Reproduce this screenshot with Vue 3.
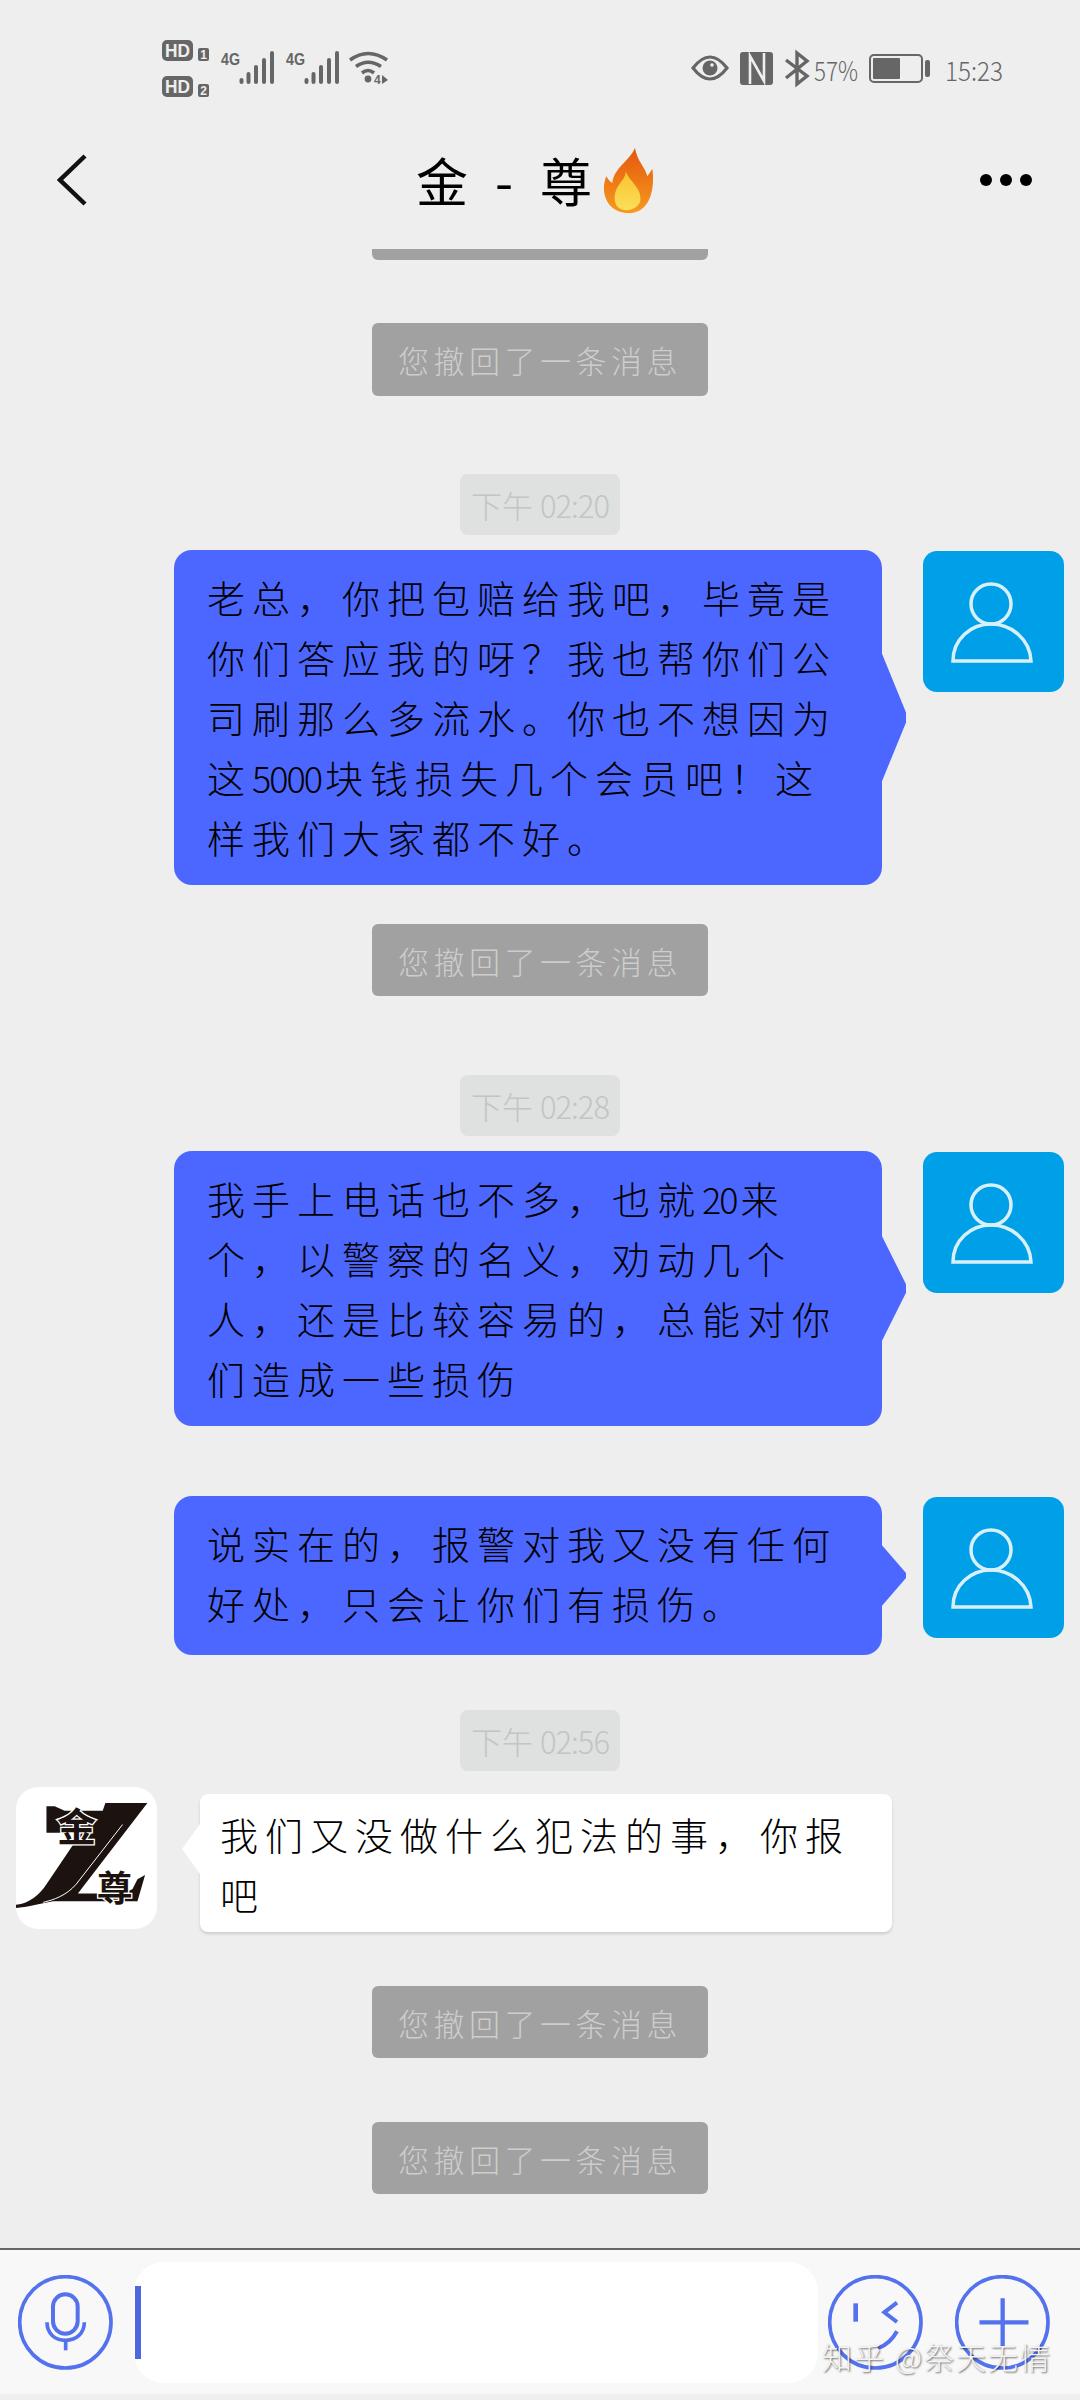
<script setup>
const rows = [
  { id: 1, cls: 'b1', lines: [['老总，你把包赔给我吧，毕竟是'], ['你们答应我的呀？我也帮你们公'], ['司刷那么多流水。你也不想因为'], ['这', '5000', '块钱损失几个会员吧！这'], ['样我们大家都不好。']] },
  { id: 2, cls: 'b2', lines: [['我手上电话也不多，也就', '20', '来'], ['个，以警察的名义，劝动几个'], ['人，还是比较容易的，总能对你'], ['们造成一些损伤']] },
  { id: 3, cls: 'b3', lines: [['说实在的，报警对我又没有任何'], ['好处，只会让你们有损伤。']] }
]
</script>

<template>
  <div class="page">
    <div class="status">
      <svg class="st-left" viewBox="162 38 230 62" width="230" height="62">
        <rect x="162" y="40" width="31" height="21" rx="5" fill="#666" />
        <text x="177.5" y="57" class="hd" text-anchor="middle" textLength="25" lengthAdjust="spacingAndGlyphs">HD</text>
        <rect x="198" y="48" width="11" height="13" rx="2" fill="#666" />
        <text x="203.5" y="59" class="hdn" text-anchor="middle">1</text>
        <rect x="162" y="76" width="31" height="21" rx="5" fill="#666" />
        <text x="177.5" y="93" class="hd" text-anchor="middle" textLength="25" lengthAdjust="spacingAndGlyphs">HD</text>
        <rect x="198" y="84" width="11" height="13" rx="2" fill="#666" />
        <text x="203.5" y="95" class="hdn" text-anchor="middle">2</text>
        <g fill="#666">
          <text x="221" y="65" class="fg" textLength="19" lengthAdjust="spacingAndGlyphs">4G</text>
          <rect x="239.5" y="78" width="4" height="6" rx="2" />
          <rect x="246.5" y="72" width="4" height="12" rx="2" />
          <rect x="254" y="65" width="4" height="19" rx="2" />
          <rect x="262" y="58" width="4" height="26" rx="2" />
          <rect x="270" y="51" width="4" height="33" rx="2" />
          <text x="286" y="65" class="fg" textLength="19" lengthAdjust="spacingAndGlyphs">4G</text>
          <rect x="304.5" y="78" width="4" height="6" rx="2" />
          <rect x="311.5" y="72" width="4" height="12" rx="2" />
          <rect x="319" y="65" width="4" height="19" rx="2" />
          <rect x="327" y="58" width="4" height="26" rx="2" />
          <rect x="335" y="51" width="4" height="33" rx="2" />
          <circle cx="368" cy="79" r="3.4" />
          <text x="374" y="84" class="wf">4</text>
          <polygon points="382,75 388,80 382,84" />
        </g>
        <g fill="none" stroke="#666" stroke-width="3.6">
          <path d="M350 60 Q368 47 387 60" />
          <path d="M356 66.500 Q368 58 381 66.500" />
          <path d="M362 73 Q368 68 374 73" />
        </g>
      </svg>
      <svg class="st-right" viewBox="690 38 350 62" width="350" height="62">
        <path d="M693 68 Q710 46 727 68 Q710 90 693 68Z" fill="none" stroke="#666" stroke-width="3.200" />
        <circle cx="710" cy="68" r="7.500" fill="#666" />
        <circle cx="712" cy="65" r="1.800" fill="#eee" />
        <rect x="740" y="52" width="33" height="33" rx="3" fill="#666" />
        <path d="M750 84V56L764 81V53" fill="none" stroke="#eee" stroke-width="2.600" />
        <path d="M786 60L807 76L797 84V53L807 61L786 78" fill="none" stroke="#666" stroke-width="3.400" />
        <text x="814" y="81" class="thin" textLength="44" lengthAdjust="spacingAndGlyphs">57%</text>
        <rect x="870" y="55" width="52" height="27" rx="4" fill="none" stroke="#666" stroke-width="2" />
        <rect x="873" y="58" width="27" height="21" rx="1" fill="#666" />
        <rect x="925" y="60" width="5" height="17" rx="2" fill="#666" />
        <text x="945" y="81" class="thin" textLength="58" lengthAdjust="spacingAndGlyphs">15:23</text>
      </svg>
    </div>

    <header class="nav">
      <svg class="back" viewBox="0 0 32 54" width="32" height="54">
        <path d="M28 3L3 27L28 51" fill="none" stroke="#111" stroke-width="4.500" />
      </svg>
      <div class="title">
        <span>金</span>
        <span class="dash">-</span>
        <span>尊</span>
        <svg class="flame" viewBox="615 30 147 195" width="49" height="65">
          <defs>
            <linearGradient id="fo" x1="0" y1="0" x2="0" y2="1">
              <stop offset="0" stop-color="#e4570f" />
              <stop offset="1" stop-color="#f79a1c" />
            </linearGradient>
            <linearGradient id="fy" x1="0" y1="0" x2="0" y2="1">
              <stop offset="0" stop-color="#f9c22e" />
              <stop offset="1" stop-color="#fbdf5b" />
            </linearGradient>
          </defs>
          <path d="M708 30C715 70 740 90 745 115C750 108 755 100 760 92C768 150 755 225 688 225C630 225 600 170 622 115C630 128 632 130 640 135C645 90 690 70 708 30Z" fill="url(#fo)" />
          <path d="M680 100C690 130 730 150 724 190C716 215 680 224 660 210C640 195 645 160 660 140C672 125 680 115 680 100Z" fill="url(#fy)" />
        </svg>
      </div>
      <div class="dots"><i></i><i></i><i></i></div>
    </header>

    <main class="chat">
      <div class="recall clipped"></div>
      <div class="recall r1">您撤回了一条消息</div>

      <div class="time t1">下午 <span class="num">02:20</span></div>
      <div class="row mine first-row">
        <div class="bubble blue b1">
          <div v-for="(l, i) in rows[0].lines" :key="i" class="line">
            <template v-for="(p, j) in l" :key="j"><span v-if="/^\d+$/.test(p)" class="digits">{{ p }}</span><template v-else>{{ p }}</template></template>
          </div>
        </div>
        <div class="avatar-me">
          <svg viewBox="0 0 141 141" width="141" height="141">
            <circle cx="68" cy="53" r="20" fill="none" stroke="#d8f0fb" stroke-width="3.500" />
            <path d="M30 110C30 88 48 73 68 73C88 73 107 88 108 110Z" fill="none" stroke="#d8f0fb" stroke-width="3.500" />
          </svg>
        </div>
      </div>

      <div class="recall r2">您撤回了一条消息</div>

      <div class="time t2">下午 <span class="num">02:28</span></div>
      <div class="row mine first-row">
        <div class="bubble blue b2">
          <div v-for="(l, i) in rows[1].lines" :key="i" class="line">
            <template v-for="(p, j) in l" :key="j"><span v-if="/^\d+$/.test(p)" class="digits">{{ p }}</span><template v-else>{{ p }}</template></template>
          </div>
        </div>
        <div class="avatar-me">
          <svg viewBox="0 0 141 141" width="141" height="141">
            <circle cx="68" cy="53" r="20" fill="none" stroke="#d8f0fb" stroke-width="3.500" />
            <path d="M30 110C30 88 48 73 68 73C88 73 107 88 108 110Z" fill="none" stroke="#d8f0fb" stroke-width="3.500" />
          </svg>
        </div>
      </div>

      <div class="row mine third-row">
        <div class="bubble blue b3">
          <div v-for="(l, i) in rows[2].lines" :key="i" class="line">{{ l[0] }}</div>
        </div>
        <div class="avatar-me">
          <svg viewBox="0 0 141 141" width="141" height="141">
            <circle cx="68" cy="53" r="20" fill="none" stroke="#d8f0fb" stroke-width="3.500" />
            <path d="M30 110C30 88 48 73 68 73C88 73 107 88 108 110Z" fill="none" stroke="#d8f0fb" stroke-width="3.500" />
          </svg>
        </div>
      </div>

      <div class="time t3">下午 <span class="num">02:56</span></div>
      <div class="row theirs">
        <div class="avatar-them">
          <svg viewBox="18 18 426 426" width="141" height="142">
            <path d="M110 75H135L165 88H280L288 65H415L205 338H345L370 325L385 295L408 282L385 362H130C90 370 50 380 18 382V372C60 368 90 340 110 310L215 155H110Z" fill="#1c1310" />
            <path d="M340 130L200 310C170 345 130 358 100 365" fill="none" stroke="#fff" stroke-width="3" />
            <text x="142" y="180" class="logo-t">金</text>
            <text x="262" y="362" class="logo-t small">尊</text>
          </svg>
        </div>
        <div class="bubble white-b">
          <div class="line">我们又没做什么犯法的事，你报</div>
          <div class="line">吧</div>
        </div>
      </div>

      <div class="recall r3">您撤回了一条消息</div>
      <div class="recall r4">您撤回了一条消息</div>
    </main>

    <footer class="composer">
      <svg viewBox="25 30 285 285" width="95" height="95">
        <g fill="none" stroke="#5471ee">
          <circle cx="167" cy="172" r="137" stroke-width="11" />
          <rect x="130" y="88" width="74" height="118" rx="37" stroke-width="12" />
          <path d="M112 172C112 205 135 226 168 226C200 226 224 205 224 172" stroke-width="11" />
          <path d="M168 226V256" stroke-width="11" />
        </g>
      </svg>
      <div class="input"><span class="cursor"></span></div>
      <svg class="emoji" viewBox="55 45 285 285" width="95" height="95">
        <g fill="none" stroke="#5471ee" stroke-width="11">
          <circle cx="197" cy="187" r="137" />
          <path d="M138 130V185" stroke-width="14" />
          <path d="M262 128L224 157L262 186" stroke-width="12" />
          <path d="M262 214C245 245 225 258 205 265" stroke-width="12" />
        </g>
      </svg>
      <svg class="plus" viewBox="433 45 287 287" width="95" height="95">
        <g fill="none" stroke="#5471ee" stroke-width="11">
          <circle cx="576" cy="188" r="138" />
          <path d="M577 115V262M507 188H655" stroke-width="13" />
        </g>
      </svg>
      <div class="mark">知乎 @祭天无情</div>
    </footer>
    <div class="foot-strip"></div>
  </div>
</template>

<style>
html, body { margin: 0; background: #eeeeef; }
</style>

<style scoped>
.page {
  position: relative;
  width: 1080px;
  height: 2400px;
  overflow: hidden;
  background: #eeeeef;
  font-family: "Noto Sans CJK SC", "Liberation Sans", sans-serif;
  font-weight: 300;
  display: flex;
  flex-direction: column;
}
.status {
  height: 130px;
  flex: none;
  display: flex;
  justify-content: space-between;
  align-items: flex-start;
  padding: 38px 40px 0 162px;
  box-sizing: border-box;
}
.hd { font: 700 19px "Liberation Sans", sans-serif; fill: #eee; }
.hdn { font: 700 12px "Liberation Sans", sans-serif; fill: #eee; }
.fg { font: 700 17px "Liberation Sans", sans-serif; }
.wf { font: 700 12px "Liberation Sans", sans-serif; }
.thin { font: 300 27px "Noto Sans CJK SC", sans-serif; fill: #666; }

.nav {
  height: 119px;
  flex: none;
  box-sizing: border-box;
  padding: 0 48px 19px 57px;
  display: grid;
  grid-template-columns: 1fr auto 1fr;
  align-items: center;
}
.title {
  display: flex;
  align-items: center;
  margin-right: 20px;
  font-size: 52px;
  font-weight: 400;
  line-height: 66px;
  color: #000;
}
.dash { width: 72px; text-align: center; }
.flame { margin-left: 12px; }
.dots {
  justify-self: end;
  display: flex;
  gap: 8px;
}
.dots i {
  width: 12px;
  height: 12px;
  border-radius: 50%;
  background: #000;
}

.chat {
  flex: 1;
  overflow: hidden;
  display: flex;
  flex-direction: column;
}
.recall {
  flex: none;
  align-self: center;
  width: 336px;
  height: 73px;
  box-sizing: border-box;
  border-radius: 6px;
  background: #a1a1a1;
  color: #cdcdcd;
  font-size: 31px;
  letter-spacing: 4.500px;
  line-height: 73px;
  text-align: center;
  white-space: nowrap;
}
.clipped { height: 11px; border-radius: 0 0 6px 6px; }
.r1 { margin-top: 63px; }
.r2 { margin-top: 39px; height: 72px; }
.r3 { margin-top: 54px; height: 72px; }
.r4 { margin-top: 64px; height: 72px; }

.time {
  flex: none;
  align-self: center;
  width: 160px;
  height: 61px;
  border-radius: 8px;
  background: #dfe0e0;
  color: #c3c4c4;
  font-size: 31px;
  line-height: 61px;
  text-align: center;
  white-space: nowrap;
}
.num { letter-spacing: -1px; font-size: 31px; }
.t1 { margin-top: 78px; }
.t2 { margin-top: 79px; }
.t3 { margin-top: 55px; }

.row { display: flex; flex: none; align-items: flex-start; }
.mine { padding-left: 174px; }
.first-row { margin-top: 15px; }
.third-row { margin-top: 70px; }
.theirs { margin-top: 16px; padding-left: 16px; }

.bubble {
  position: relative;
  box-sizing: border-box;
  font-size: 38px;
  letter-spacing: 7px;
  line-height: 60px;
  color: #000;
  white-space: nowrap;
}
.line { height: 60px; }
.digits { font-size: 36px; letter-spacing: -2px; margin-right: 4px; }
.blue {
  width: 708px;
  padding: 17px 0 18px 33px;
  margin-right: 41px;
  border-radius: 18px;
  background: #4c67ff;
}
.blue::after {
  content: "";
  position: absolute;
  left: 100%;
  top: 31%;
  width: 24px;
  height: 38%;
  background: #4c67ff;
  clip-path: polygon(0 0, 100% 46%, 100% 54%, 0 100%);
}
.b3 { padding-bottom: 22px; }
.avatar-me {
  flex: none;
  width: 141px;
  height: 141px;
  margin-top: 1px;
  border-radius: 14px;
  background: #00a0e9;
}
.avatar-me svg, .avatar-them svg { display: block; }
.avatar-them {
  flex: none;
  width: 141px;
  height: 142px;
  margin-right: 43px;
  border-radius: 22px;
  background: #fff;
  overflow: hidden;
}
.logo-t {
  font-family: "Noto Sans CJK SC", sans-serif;
  font-weight: 700;
  font-size: 118px;
  fill: #1c1310;
  stroke: #fff;
  stroke-width: 8px;
  paint-order: stroke;
}
.logo-t.small { font-size: 108px; }
.white-b {
  width: 692px;
  margin-top: 7px;
  padding: 10px 0 8px 20px;
  border-radius: 8px;
  background: #fff;
  box-shadow: 0 2px 3px rgba(0, 0, 0, 0.14);
}
.white-b::before {
  content: "";
  position: absolute;
  right: 100%;
  top: 30px;
  width: 18px;
  height: 50px;
  background: #fff;
  clip-path: polygon(100% 0, 0 50%, 100% 100%);
}

.composer {
  position: relative;
  flex: none;
  height: 146px;
  box-sizing: border-box;
  border-top: 2px solid #666;
  background: #f8f8f8;
  display: flex;
  align-items: center;
  padding-left: 18px;
}
.input {
  width: 684px;
  height: 121px;
  margin: 0 10px 0 21px;
  border-radius: 30px;
  background: #fff;
  display: flex;
  align-items: center;
}
.cursor {
  width: 6px;
  height: 73px;
  margin-left: 1px;
  background: #4f67dc;
}
.plus { margin-left: 32px; }
.mark {
  position: absolute;
  left: 822px;
  top: 88px;
  font-size: 30px;
  letter-spacing: 2px;
  line-height: 36px;
  color: #f4f4f4;
  white-space: nowrap;
  text-shadow: 1px 1px 2px rgba(0, 0, 0, 0.6);
}
.foot-strip { height: 6px; flex: none; background: #efefef; }
</style>
